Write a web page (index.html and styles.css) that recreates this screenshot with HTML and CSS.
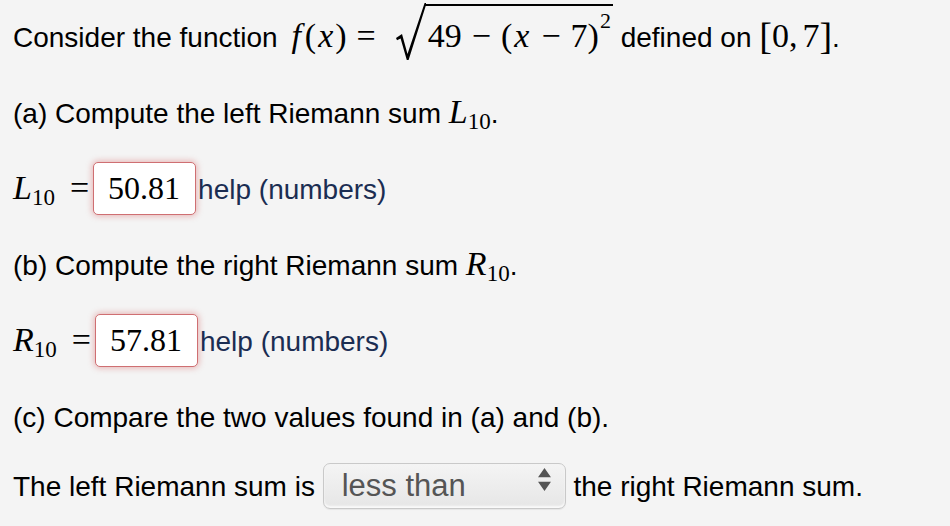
FILE: index.html
```html
<!DOCTYPE html>
<html lang="en">
<head>
  <meta charset="UTF-8">
  <title>Riemann sums</title>
  <link rel="stylesheet" href="styles.css">
</head>
<body>

  <!-- Problem text -->
  <div class="problem">
    <p class="line">Consider the function
      <span class="math"><i class="fn">f</i>(<i class="var">x</i>)<span class="rel">=</span><span class="sqrt"><svg class="radical" viewBox="0 0 30 58" preserveAspectRatio="none"><path d="M0 35 L6 31 L11.5 51 L28.6 0 H30 V2 L12.6 57 H10.8 L4.6 35.6 L1 37.3 Z"/></svg><span class="radicand">49<span class="bin">&minus;</span>(<i class="var">x</i><span class="bin">&minus;</span>7)<sup>2</sup></span></span></span>
      defined on <span class="math"><span class="big">[</span>0,<span class="thin"></span>7<span class="big">]</span></span>.</p>

    <p class="line">(a) Compute the left Riemann sum <span class="math"><i>L</i><sub>10</sub></span>.</p>

    <p class="line"><span class="math"><i>L</i><sub>10</sub><span class="rel eq">=</span></span><input class="answer" type="text" value="50.81"><a class="help" href="#">help (numbers)</a></p>

    <p class="line">(b) Compute the right Riemann sum <span class="math"><i>R</i><sub>10</sub></span>.</p>

    <p class="line"><span class="math"><i>R</i><sub>10</sub><span class="rel eq">=</span></span><input class="answer" type="text" value="57.81"><a class="help" href="#">help (numbers)</a></p>

    <p class="line">(c) Compare the two values found in (a) and (b).</p>

    <p class="line last">The left Riemann sum is
      <span class="select-wrap"><select class="choice">
        <option>less than</option>
        <option>equal to</option>
        <option>greater than</option>
      </select><svg class="arrows" viewBox="0 0 16 26"><path d="M8 0 L15 10 H1 Z M1 15 H15 L8 25 Z"/></svg></span>
      the right Riemann sum.</p>
  </div>

</body>
</html>
```

FILE: styles.css
```css
body { margin: 0; padding: 0 13px; background-color: #f4f4f4; color: #000; font-family: "Liberation Sans", Arial, Helvetica, sans-serif; font-size: 28px; }
.problem { display: flex; flex-direction: column; }
.line { margin: 0; line-height: 76px; height: 76px; white-space: nowrap; }
.line.last { line-height: 62px; height: 62px; }

/* math */
.math { font-family: "Liberation Serif", "Times New Roman", serif; font-size: 34px; line-height: 1; }
.math i { font-style: italic; }
.math .fn { margin: 0 4px 0 6px; }
.math .var { margin: 0 2px; }
.math sub { font-size: 23px; vertical-align: -6px; line-height: 0; }
.math sup { font-size: 22px; vertical-align: 19px; line-height: 0; margin-left: 1px; }
.rel { margin: 0 10px; }
.rel.eq { margin: 0 4px 0 15px; }
.bin { margin: 0 10px; }
.thin { display: inline-block; width: 5px; }
.big { font-size: 38px; vertical-align: -2px; line-height: 0; }

.sqrt { margin-left: 10px; white-space: nowrap; }
.radical { width: 30px; height: 58px; vertical-align: -14px; margin-right: -1px; }
.radicand { display: inline-block; border-top: 2px solid #000; padding: 12px 2px 0 3px; line-height: 36px; }

/* answer boxes */
.answer { font-family: "Liberation Serif", "Times New Roman", serif; font-size: 32px; width: 103px; height: 53px; box-sizing: border-box; padding: 0 14px; border: 1px solid #cf6f72; border-radius: 5px; background: #fff; box-shadow: 0 0 6px 1px rgba(210, 80, 80, 0.4); color: #000; margin: 0; }
.help { color: #1b2d52; text-decoration: none; margin-left: 2px; }

/* popup */
.select-wrap { position: relative; display: inline-block; }
.choice { -webkit-appearance: none; appearance: none; font-family: "Liberation Sans", Arial, sans-serif; font-size: 31px; color: #555; width: 243px; height: 46px; padding: 0 40px 0 18px; border: 1px solid #c9c9c9; border-radius: 7px; background: linear-gradient(#f4f4f4, #e6e6e6); box-shadow: inset 0 -2px 2px rgba(255, 255, 255, 0.8), 0 1px 1px rgba(0, 0, 0, 0.06); margin: 0; }
.arrows { position: absolute; right: 14px; top: 12px; width: 15px; height: 24px; fill: #555; pointer-events: none; }
```
